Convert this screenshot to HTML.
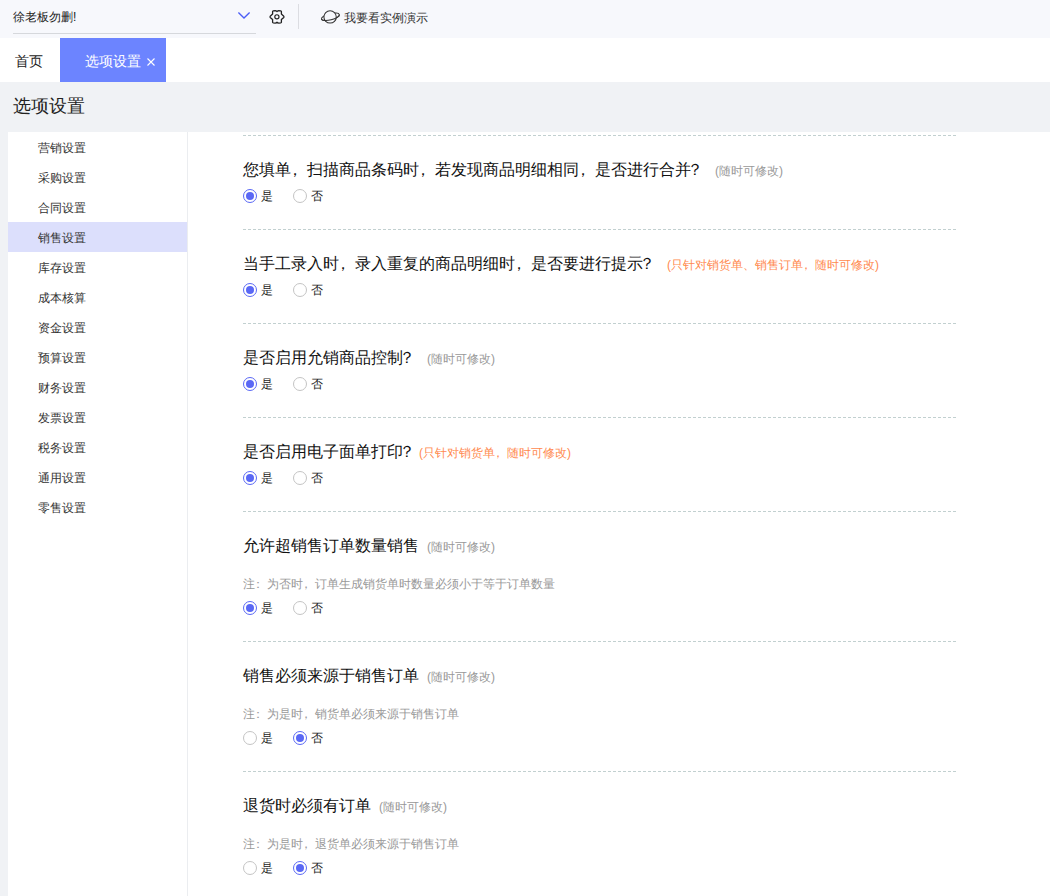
<!DOCTYPE html>
<html><head><meta charset="utf-8">
<style>
*{box-sizing:border-box;margin:0;padding:0}
html,body{width:1050px;height:896px;overflow:hidden}
body{position:relative;background:#f0f2f5;font-family:"Liberation Sans",sans-serif;color:#333}
.abs{position:absolute;white-space:nowrap}
#top{position:absolute;left:0;top:0;width:1050px;height:38px;background:#f7f8fc}
#tabs{position:absolute;left:0;top:38px;width:1050px;height:44px;background:#fff}
#side{position:absolute;left:8px;top:132px;width:180px;height:764px;background:#fff;border-right:1px solid #ebedf0}
#main{position:absolute;left:188px;top:132px;width:862px;height:764px;background:#fff}
.item{position:absolute;left:0;width:179px;height:30px;line-height:30px;padding-left:30px;padding-top:1px;font-size:12px;color:#333}
.item.on{background:#dcdffc}
.sep{position:absolute;left:243px;width:713px;height:1px;background:repeating-linear-gradient(to right,#c2d0d0 0 3px,transparent 3px 5px)}
.ttl{position:absolute;left:243px;font-size:16px;line-height:20px;color:#111;white-space:nowrap}
.hint{font-size:12px;color:#999;margin-left:8px}
.org{font-size:12px;color:#ff8a4f;margin-left:8px}
.note{position:absolute;left:243px;font-size:12px;line-height:16px;color:#999;white-space:nowrap}
.rad{position:absolute;left:243px;height:14px;font-size:12px;line-height:14px;color:#222;white-space:nowrap}
.r{position:absolute;top:0;width:14px;height:14px;border-radius:50%;border:1px solid #c4c4c4;background:#fff}
.r.on{border-color:#5a68f5}
.r.on::after{content:"";position:absolute;left:2px;top:2px;width:8px;height:8px;border-radius:50%;background:#5a68f5}
.rl{position:absolute;top:0}
b{font-weight:normal}
.pc{position:relative;left:-.28em}
.pq{position:relative;left:-.22em}
.pn{position:relative;left:-.29em}
</style></head><body>
<div id="top">
  <div class="abs" style="left:13px;top:9px;font-size:12px;line-height:16px;color:#222">徐老板勿删!</div>
  <div class="abs" style="left:13px;top:33px;width:243px;height:1px;background:#d6d8dc"></div>
  <svg class="abs" style="left:237px;top:10px" width="14" height="10" viewBox="0 0 14 10"><path d="M1.4 2.5 L7 8.1 L12.6 2.5" fill="none" stroke="#4c5ef6" stroke-width="1.35"/></svg>
  <svg class="abs" style="left:266px;top:6px" width="22" height="22" viewBox="0 0 22 22"><path d="M6.6 5.4 Q6.6 4.9 7.3 4.8 L9.2 4.65 Q10.1 4.7 11 5.5 Q11.9 4.7 12.8 4.65 L14.7 4.8 Q15.4 4.9 15.4 5.4 L15.4 8.1 L17.8 10.3 Q18.2 10.85 17.8 11.4 L15.4 13.6 L15.4 16.3 Q15.4 16.8 14.7 16.9 L12.8 17.05 Q11.9 17 11 16.2 Q10.1 17 9.2 17.05 L7.3 16.9 Q6.6 16.8 6.6 16.3 L6.6 13.6 L4.2 11.4 Q3.8 10.85 4.2 10.3 L6.6 8.1 Z" fill="none" stroke="#222" stroke-width="1.3" stroke-linejoin="round"/><circle cx="10.9" cy="10.85" r="2.1" fill="none" stroke="#222" stroke-width="1.2"/></svg>
  <div class="abs" style="left:298px;top:4px;width:1px;height:25px;background:#dcdde2"></div>
  <svg class="abs" style="left:317px;top:5px" width="26" height="24" viewBox="0 0 26 24"><ellipse cx="13.4" cy="11.8" rx="9.2" ry="3.1" transform="rotate(-14 13.4 11.8)" fill="none" stroke="#333" stroke-width="1.05"/><circle cx="13.1" cy="11.9" r="6.2" fill="#f7f8fc" stroke="#333" stroke-width="1.05"/><path d="M4.47 14.03 A9.2 3.1 -14 0 0 22.33 9.57" fill="none" stroke="#333" stroke-width="1.05"/></svg>
  <div class="abs" style="left:344px;top:10px;font-size:12px;line-height:16px;color:#333">我要看实例演示</div>
</div>
<div id="tabs">
  <div class="abs" style="left:15px;top:14px;font-size:14px;line-height:18px;color:#222">首页</div>
  <div class="abs" style="left:60px;top:0;width:106px;height:44px;background:#6c84ff"></div>
  <div class="abs" style="left:85px;top:14px;font-size:14px;line-height:18px;color:#fff">选项设置</div>
  <svg class="abs" style="left:146px;top:19px" width="10" height="10" viewBox="0 0 10 10"><path d="M1.5 1.5 L8.5 8.5 M8.5 1.5 L1.5 8.5" stroke="#fff" stroke-width="1.1"/></svg>
</div>
<div class="abs" style="left:13px;top:95px;font-size:18px;line-height:22px;color:#222">选项设置</div>
<div id="side">
  <div class="item" style="top:0">营销设置</div>
  <div class="item" style="top:30px">采购设置</div>
  <div class="item" style="top:60px">合同设置</div>
  <div class="item on" style="top:90px">销售设置</div>
  <div class="item" style="top:120px">库存设置</div>
  <div class="item" style="top:150px">成本核算</div>
  <div class="item" style="top:180px">资金设置</div>
  <div class="item" style="top:210px">预算设置</div>
  <div class="item" style="top:240px">财务设置</div>
  <div class="item" style="top:270px">发票设置</div>
  <div class="item" style="top:300px">税务设置</div>
  <div class="item" style="top:330px">通用设置</div>
  <div class="item" style="top:360px">零售设置</div>
</div>
<div id="main"></div>

<div class="sep" style="top:135px"></div>
<div class="ttl" style="top:160px">您填单<b class="pc">，</b>扫描商品条码时<b class="pc">，</b>若发现商品明细相同<b class="pc">，</b>是否进行合并<b class="pq">？</b><span class="hint">(随时可修改)</span></div>
<div class="rad" style="top:189px"><i class="r on" style="left:0"></i><span class="rl" style="left:18px">是</span><i class="r" style="left:50px"></i><span class="rl" style="left:68px">否</span></div>

<div class="sep" style="top:229px"></div>
<div class="ttl" style="top:254px">当手工录入时<b class="pc">，</b>录入重复的商品明细时<b class="pc">，</b>是否要进行提示<b class="pq">？</b><span class="org">(只针对销货单、销售订单<b class="pc">，</b>随时可修改)</span></div>
<div class="rad" style="top:283px"><i class="r on" style="left:0"></i><span class="rl" style="left:18px">是</span><i class="r" style="left:50px"></i><span class="rl" style="left:68px">否</span></div>

<div class="sep" style="top:323px"></div>
<div class="ttl" style="top:348px">是否启用允销商品控制<b class="pq">？</b><span class="hint">(随时可修改)</span></div>
<div class="rad" style="top:377px"><i class="r on" style="left:0"></i><span class="rl" style="left:18px">是</span><i class="r" style="left:50px"></i><span class="rl" style="left:68px">否</span></div>

<div class="sep" style="top:417px"></div>
<div class="ttl" style="top:442px">是否启用电子面单打印<b class="pq">？</b><span class="org" style="margin-left:0">(只针对销货单<b class="pc">，</b>随时可修改)</span></div>
<div class="rad" style="top:471px"><i class="r on" style="left:0"></i><span class="rl" style="left:18px">是</span><i class="r" style="left:50px"></i><span class="rl" style="left:68px">否</span></div>

<div class="sep" style="top:511px"></div>
<div class="ttl" style="top:536px">允许超销售订单数量销售<span class="hint">(随时可修改)</span></div>
<div class="note" style="top:576px">注<b class="pn">：</b>为否时<b class="pc">，</b>订单生成销货单时数量必须小于等于订单数量</div>
<div class="rad" style="top:601px"><i class="r on" style="left:0"></i><span class="rl" style="left:18px">是</span><i class="r" style="left:50px"></i><span class="rl" style="left:68px">否</span></div>

<div class="sep" style="top:641px"></div>
<div class="ttl" style="top:666px">销售必须来源于销售订单<span class="hint">(随时可修改)</span></div>
<div class="note" style="top:706px">注<b class="pn">：</b>为是时<b class="pc">，</b>销货单必须来源于销售订单</div>
<div class="rad" style="top:731px"><i class="r" style="left:0"></i><span class="rl" style="left:18px">是</span><i class="r on" style="left:50px"></i><span class="rl" style="left:68px">否</span></div>

<div class="sep" style="top:771px"></div>
<div class="ttl" style="top:796px">退货时必须有订单<span class="hint">(随时可修改)</span></div>
<div class="note" style="top:836px">注<b class="pn">：</b>为是时<b class="pc">，</b>退货单必须来源于销售订单</div>
<div class="rad" style="top:861px"><i class="r" style="left:0"></i><span class="rl" style="left:18px">是</span><i class="r on" style="left:50px"></i><span class="rl" style="left:68px">否</span></div>
</body></html>
